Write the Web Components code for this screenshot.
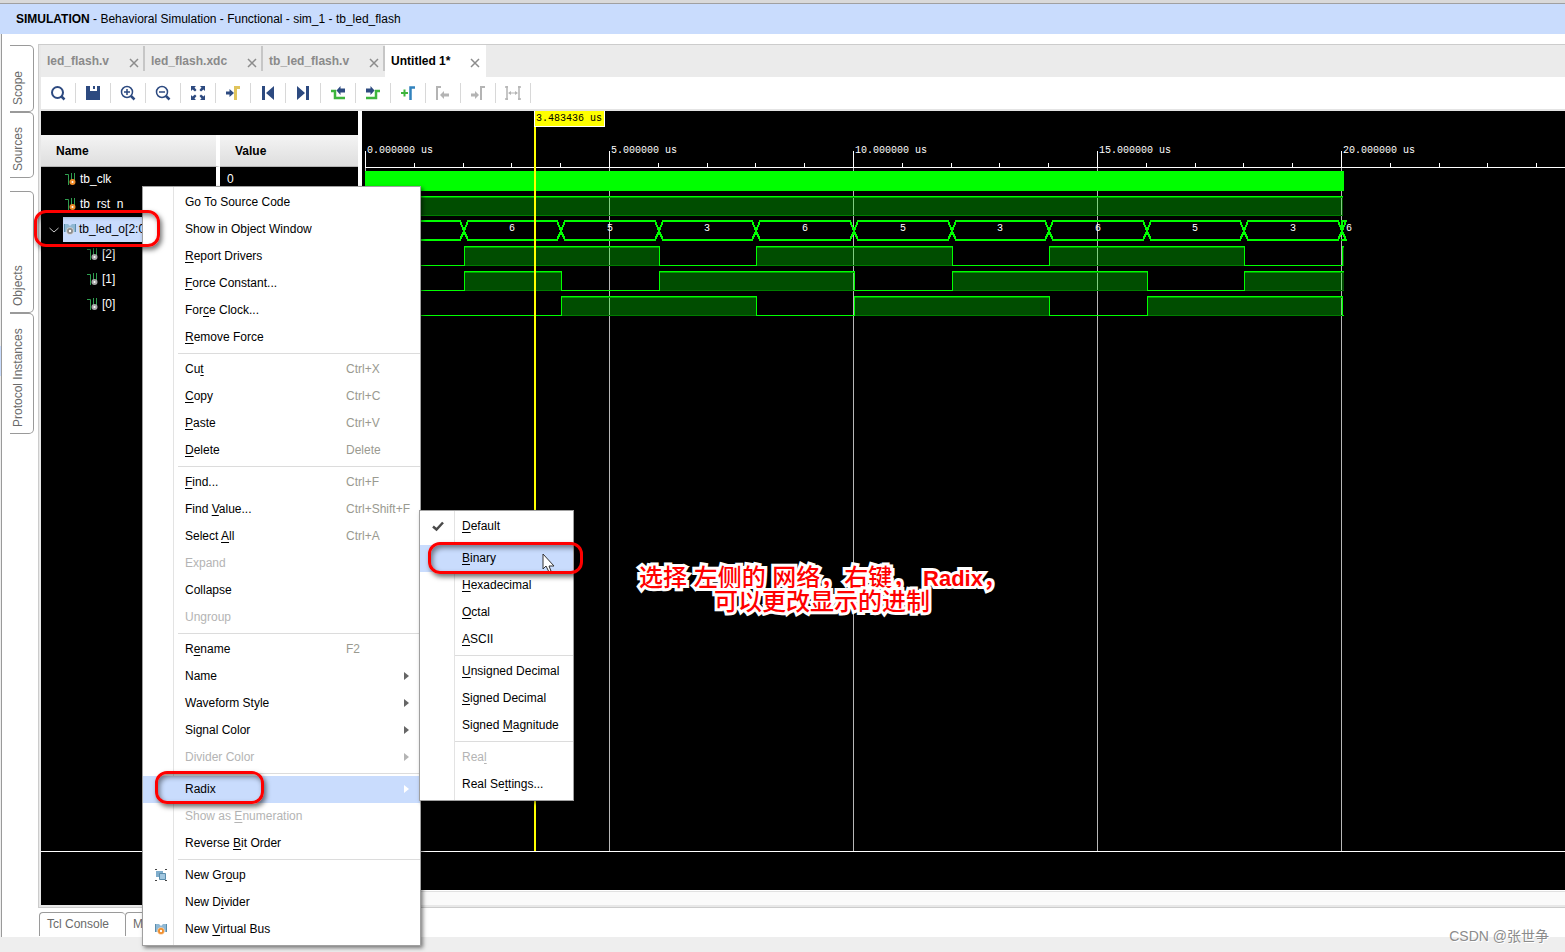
<!DOCTYPE html>
<html lang="en">
<head>
<meta charset="utf-8">
<title>Behavioral Simulation - tb_led_flash</title>
<style>
  body { margin: 0; font: 12px/16px "Liberation Sans", Arial, sans-serif; color: #000; }
</style>
</head>
<body>
<sim-app></sim-app>

<script>
const define = (name, html, setup) => {
  const template = document.createElement('template');
  template.innerHTML = html;
  customElements.define(name, class extends HTMLElement {
    constructor() {
      super();
      this.attachShadow({ mode: 'open' }).append(template.content.cloneNode(true));
    }
    connectedCallback() {
      if (setup && !this.ready) { this.ready = true; setup(this, this.shadowRoot); }
    }
  });
};

/* ---------- icons ---------- */
const NAVY = '#2d4a80', GREEN = '#3db53d', GREY = '#b4b4b4';
const lens = '<circle cx="7.500" cy="7.500" r="5.500" fill="none" stroke="#2d4a80" stroke-width="2"/><path d="M11 11 14.500 14.500" stroke="#2d4a80" stroke-width="2.500"/>';
const thinLens = '<circle cx="7" cy="7" r="5.500" fill="none" stroke="#2d4a80" stroke-width="1.500"/><path d="M11 11 14.500 14.500" stroke="#2d4a80" stroke-width="2.500"/>';
const signal = dot => `<path d="M0 1.500h3.500V12M6.500 0v8M9.500 0v7" fill="none" stroke="#2f9e4f"/><circle cx="7.500" cy="9" r="3" fill="${dot}"/><circle cx="7.500" cy="9" r="1" fill="#fff"/>`;
const bus = dot => `<path d="M0 1h4l2 2 2-2h4v8H0z" fill="#8fb8d4"/><path d="M.500 1v8M11.500 1v8" stroke="#5a8cab"/><circle cx="6" cy="8" r="3.500" fill="${dot}" stroke="#fff" stroke-width=".5"/><circle cx="6" cy="8" r="1.200" fill="#fff"/>`;
const ICONS = {
  search: [16, lens],
  save: [16, `<path d="M1 1h4v5h7V1h3v14H1z" fill="${NAVY}"/><path d="M8 1h2v3H8z" fill="${NAVY}"/>`],
  zoomin: [16, thinLens + `<path d="M4 7h6M7 4v6" stroke="${NAVY}" stroke-width="1.500"/>`],
  zoomout: [16, thinLens + `<path d="M4 7h6" stroke="${NAVY}" stroke-width="1.500"/>`],
  fit: [16, `<path d="M1 1h5L4.500 2.500 6.500 5 5 6.500 2.500 4.500 1 6zM15 1v5l-1.500-1.500L11 6.500 9.500 5l2-2.500L10 1zM1 15v-5l1.500 1.500L5 9.500 6.500 11l-2 2.500L6 15zM15 15h-5l1.500-1.500-2-2.500L11 9.500l2.500 2L15 10z" fill="${NAVY}"/>`],
  goto: [16, `<path d="M1 6.500h3.500V4L9 8l-4.500 4V9.500H1z" fill="${NAVY}"/><path d="M10.500 15V2.500H15" fill="none" stroke="#e0c45c" stroke-width="3"/>`],
  first: [16, `<path d="M2 1h3v14H2zM14 1v14L6 8z" fill="${NAVY}"/>`],
  last: [16, `<path d="M11 1h3v14h-3zM2 1v14l8-7z" fill="${NAVY}"/>`],
  prev: [16, `<path d="M1 6h4v7h10" fill="none" stroke="${GREEN}" stroke-width="2.500"/><path d="M6.500 5.500 10.500 1v2.500H15v4h-4.500V10z" fill="${NAVY}"/>`],
  next: [16, `<path d="M15 6h-4v7H1" fill="none" stroke="${GREEN}" stroke-width="2.500"/><path d="M9.500 5.500 5.500 1v2.500H1v4h4.500V10z" fill="${NAVY}"/>`],
  add: [16, `<path d="M1 8h7M4.500 4.500v7" stroke="${GREEN}" stroke-width="2"/><path d="M10.500 15V2.500H15" fill="none" stroke="#3282bd" stroke-width="2.500"/>`],
  leave: [16, `<path d="M2 15V2h4" fill="none" stroke="${GREY}" stroke-width="2"/><path d="M5 10l4-4v2.500h5v3H9V14z" fill="${GREY}"/>`],
  enter: [16, `<path d="M11 15V2h4" fill="none" stroke="${GREY}" stroke-width="2"/><path d="M9 10 5 6v2.500H1v3h4V14z" fill="${GREY}"/>`],
  span: [16, `<path d="M2 1v14M14 1v14M0 2h3M0 14h3M13 2h3M13 14h3" fill="none" stroke="${GREY}" stroke-width="1.500"/><path d="M3 8l3-2v1.500h4V6l3 2-3 2V8.500H6V10z" fill="${GREY}"/>`],
  signal: [12, signal('#f08c28')],
  bit: [12, signal('#a8a8a8')],
  bus: [12, bus('#8c8c8c')],
  vbus: [12, bus('#f08c28')],
  chevron: [12, '<path d="M1.500 4 6 8l4.500-4" fill="none" stroke="#c8c8c8"/>'],
  close: [10, '<path d="M1 1l8 8M9 1 1 9" stroke="#8c8c8c" stroke-width="1.500"/>'],
  check: [12, '<path d="M1 6.500 4.500 9.500 11 2.500" fill="none" stroke="#4a4a4a" stroke-width="2.500"/>'],
  group: [12, '<path d="M1 2h7v6H1z" fill="#7fadcc"/><path d="M4.500 4.500h6v6h-6z" fill="#a0c6df" stroke="#5a8cab"/><path d="M0 0h2v1H0zM10 0h2v1h-2zM0 11h2v1H0zM10 11h2v1h-2z" fill="#444"/>'],
};
const icon = name => {
  const el = document.createElement('sim-icon');
  el.setAttribute('name', name);
  return el;
};
customElements.define('sim-icon', class extends HTMLElement {
  connectedCallback() {
    if (this.shadowRoot) return;
    const [size, body] = ICONS[this.getAttribute('name')];
    this.attachShadow({ mode: 'open' }).innerHTML =
      `<style>:host{display:inline-flex}svg{display:block}</style>
       <svg width="${size}" height="${size}" viewBox="0 0 ${size} ${size}" aria-hidden="true">${body}</svg>`;
  }
});

/* ---------- title ---------- */
define('title-bar', `
  <style>
    :host { display: block; border-top: 3px solid #d9d9d9; }
    header { border-top: 1px solid #a0a0a0; background: #c9dcfd; line-height: 30px; padding-left: 16px; }
  </style>
  <header><slot></slot></header>`);

/* ---------- side tabs ---------- */
define('rail-tab', `
  <style>
    :host { display: block; }
    button { all: unset; box-sizing: border-box; display: block; width: 24px; height: var(--size);
      writing-mode: vertical-rl; transform: rotate(180deg); padding: 6px 0 0 7px;
      border: 1px solid #9a9a9a; border-right: 0; border-radius: 5px 0 0 5px; color: #6a6a6a; line-height: 16px; }
  </style>
  <button role="tab"><slot></slot></button>`,
  (host, root) => root.querySelector('button').style.setProperty('--size', host.getAttribute('size') + 'px'));

define('side-rail', `
  <style>
    :host { display: flex; }
    .edge { width: 1px; border-right: 1px solid #9a9a9a;
      background: linear-gradient(#c9dcfd, #c9dcfd) 0 312px / 1px 30px no-repeat #eee; }
    nav { display: flex; flex-direction: column; padding: 11px 4px 0 8px; }
    .gap { height: 13px; }
  </style>
  <div class="edge"></div>
  <nav role="tablist">
    <rail-tab size="67">Scope</rail-tab>
    <rail-tab size="66">Sources</rail-tab>
    <div class="gap"></div>
    <rail-tab size="122">Objects</rail-tab>
    <rail-tab size="121">Protocol Instances</rail-tab>
  </nav>`);

/* ---------- editor tabs ---------- */
define('editor-tab', `
  <style>
    :host { display: flex; padding: 1px 0 0; color: #8a8a8a; font-weight: bold; }
    .tab { display: flex; align-items: center; gap: 20px; padding: 0 4px 0 6px; border-right: 2px solid #c6c6c6; height: 25px; }
    :host([active]) { background: #fff; color: #000; }
    :host([active]) .tab { border-color: transparent; }
    button { all: unset; display: flex; }
    .close { padding-top: 8px; }
    .name { padding-top: 4px; }
  </style>
  <div class="tab"><button class="name" role="tab"><slot></slot></button>
  <button class="close" aria-label="Close"><sim-icon name="close"></sim-icon></button></div>`);

/* ---------- toolbar ---------- */
define('tool-button', `
  <style>
    :host { display: flex; width: 34px; border-right: 1px solid #d8d8d8; height: 20px; }
    button { all: unset; flex: 1; display: flex; align-items: center; justify-content: center; }
  </style>
  <button></button>`,
  (host, root) => {
    const button = root.querySelector('button');
    button.setAttribute('aria-label', host.getAttribute('icon'));
    button.append(icon(host.getAttribute('icon')));
  });

define('tool-bar', `
  <style>:host { display: flex; align-items: center; height: 32px; background: #fff; border-bottom: 2px solid #e4e4e4; }</style>
  <slot></slot>`);

/* ---------- signal list ---------- */
define('signal-table', `
  <style>
    :host { display: flex; flex-direction: column; background: #000; color: #fff; padding-top: 24px; width: 317px; }
    table { border-collapse: separate; border-spacing: 0; table-layout: fixed; width: 100%; }
    th { box-sizing: border-box; height: 32px; padding: 0 0 0 15px; text-align: left; color: #000;
      background: linear-gradient(#f4f4f4, #dedede); border-bottom: 1px solid #b4b4b4; }
    th, td { border-right: 4px solid #fff; }
    th:last-child, td:last-child { border-right: 0; }
    th:first-child { width: 179px; }
    td { box-sizing: border-box; height: 25px; padding: 0; }
    td:last-child { padding: 0 0 2px 7px; }
    .cell { display: flex; align-items: center; height: 25px; padding-left: 24px; overflow: hidden; white-space: nowrap; }
    .sig { box-sizing: border-box; flex: 1; display: flex; align-items: center; gap: 3px; height: 25px; padding-bottom: 1px; }
    .bus { padding-left: 7px; gap: 3px; }
    .bus .sig { background: #c9dcfd; color: #000; padding-left: 1px; }
    .bit { padding-left: 46px; }
    .foot { margin-top: auto; height: 53px; border-top: 1px solid #fff; }
  </style>
  <table>
    <thead><tr><th>Name</th><th>Value</th></tr></thead>
    <tbody>
      <tr><td><div class="cell"><span class="sig"><sim-icon name="signal"></sim-icon>tb_clk</span></div></td><td>0</td></tr>
      <tr><td><div class="cell"><span class="sig"><sim-icon name="signal"></sim-icon>tb_rst_n</span></div></td><td></td></tr>
      <tr><td><div class="cell bus"><sim-icon name="chevron"></sim-icon><span class="sig"><sim-icon name="bus"></sim-icon>tb_led_o[2:0]</span></div></td><td></td></tr>
      <tr><td><div class="cell bit"><span class="sig"><sim-icon name="bit"></sim-icon>[2]</span></div></td><td></td></tr>
      <tr><td><div class="cell bit"><span class="sig"><sim-icon name="bit"></sim-icon>[1]</span></div></td><td></td></tr>
      <tr><td><div class="cell bit"><span class="sig"><sim-icon name="bit"></sim-icon>[0]</span></div></td><td></td></tr>
    </tbody>
  </table>
  <div class="foot"></div>`);

/* ---------- waveform ---------- */
define('wave-view', `
  <style>
    :host { display: flex; flex-direction: column; flex: 1; min-width: 0; margin-left: 4px; }
    .plot { flex: 1; position: relative; background: #000; overflow: hidden; }
    svg { position: absolute; inset: 0; width: 100%; height: 100%; }
    text { font: 10px "Liberation Mono", monospace; fill: #fff; }
    .marker { position: absolute; left: 172px; top: 0; bottom: 39px; border-left: 2px solid #ff0; }
    .marker output { position: absolute; left: -2px; top: 0; padding: 1px 2px 0 1px; background: #ff0; color: #000;
      border: solid #fff; border-width: 0 1px 1px 1px; font: 10px/14px "Liberation Mono", monospace; white-space: nowrap; }
    .scroll { height: 13px; background: #fafafa; border-top: 1px solid #e0e0e0; margin-top: 1px; }
  </style>
  <div class="plot">
    <svg xmlns="http://www.w3.org/2000/svg" shape-rendering="crispEdges"></svg>
    <div class="marker"><output>3.483436 us</output></div>
  </div>
  <div class="scroll"></div>`,
  (host, root) => {
    const svg = root.querySelector('svg');
    const ORIGIN = 3, STEP = 48.8, FLOOR = 740, END = 982;
    const edges = Array.from({ length: 11 }, (_, k) => Math.floor(4.5 + 97.6 * k));
    let out = '';
    const rect = (x, y, w, h, c) => out += `<rect x="${x}" y="${y}" width="${w}" height="${h}" fill="${c}"/>`;

    rect(ORIGIN, 56, '100%', 1, '#fff');
    rect(0, FLOOR, '100%', 1, '#fff');
    for (let i = 0; i < 60; i++) {
      const x = Math.round(ORIGIN + i * STEP);
      if (i % 5 === 0) {
        if (i <= 20) {
          rect(x, 40, 1, 17, '#fff');
          rect(x, 57, 1, FLOOR - 57, '#b8b8b8');
          out += `<text x="${x + 2}" y="42">${i}.000000 us</text>`;
        }
      } else rect(x, 52, 1, 4, '#fff');
    }
    rect(ORIGIN, 60, END - ORIGIN, 20, '#0f0');

    /* high level: translucent body, bright top edge, dim bottom edge */
    const high = (a, b, y) => {
      rect(a, y, b - a, 20, 'rgba(0,255,0,.3)');
      rect(a, y + 19, b - a, 1, '#007c00');
      rect(a, y + 1, b - a, 1, '#00a000');
      rect(a, y, b - a, 1, '#0f0');
    };
    high(ORIGIN, END - 1, 85);

    /* one-bit lanes, one level per bus period */
    const bit = (levels, y) => levels.forEach((on, k) => {
      const a = k ? edges[k] : ORIGIN, b = k < 10 ? edges[k + 1] : END;
      if (on) high(a, b, y); else rect(a, y + 19, b - a, 1, '#0f0');
      if (k && levels[k - 1] !== on) rect(a, y, 1, 20, '#0f0');
    });
    bit([0, 1, 1, 0, 1, 1, 0, 1, 1, 0, 1], 135);
    bit([0, 1, 0, 1, 1, 0, 1, 1, 0, 1, 1], 160);
    bit([0, 0, 1, 1, 0, 1, 1, 0, 1, 1, 0], 185);

    /* bus lane */
    for (let k = 0; k < 10; k++) {
      const a = edges[k], b = edges[k + 1];
      out += `<path d="M${a} 120L${a + 4} 110H${b - 4}L${b} 120L${b - 4} 129H${a + 4}Z" fill="none" stroke="#0f0" stroke-width="2"/>`;
      if (k) out += `<text x="${Math.floor((a + b) / 2)}" y="120" text-anchor="middle">${[3, 6, 5][k % 3]}</text>`;
    }
    out += `<path d="M985 110H980L${edges[10]} 120L984 129H979M${edges[10]} 120L984 110" fill="none" stroke="#0f0" stroke-width="2"/>`;
    out += `<text x="984" y="120">6</text>`;
    svg.innerHTML = out;
  });

/* ---------- menus ---------- */
define('menu-item', `
  <style>
    :host { display: block; }
    button { all: unset; box-sizing: border-box; width: 100%; height: 27px; padding-bottom: 1px; display: flex; align-items: center; }
    .icon { width: 36px; display: flex; justify-content: center; margin-right: 6px; flex: none; }
    .label { flex: 1; white-space: nowrap; text-underline-offset: 2px; }
    .key { width: 74px; color: #9a9a90; white-space: nowrap; }
    .arrow { width: 0; border: 4px solid transparent; border-left: 5px solid #666; border-right: 0; margin-right: 11px; }
    :host([disabled]) { color: #b4b4b4; }
    :host([disabled]) .arrow { border-left-color: #b4b4b4; }
    :host([hot]) button { background: #c9dcfd; }
    :host([hot]) .arrow { border-left-color: #fff; }
  </style>
  <button role="menuitem"><span class="icon"></span><span class="label"><slot></slot></span></button>`,
  (host, root) => {
    const button = root.querySelector('button');
    if (host.hasAttribute('icon')) root.querySelector('.icon').append(icon(host.getAttribute('icon')));
    if (host.hasAttribute('key')) {
      const key = document.createElement('span');
      key.className = 'key'; key.textContent = host.getAttribute('key');
      button.append(key);
    }
    if (host.hasAttribute('sub')) {
      const arrow = document.createElement('span');
      arrow.className = 'arrow';
      button.append(arrow);
    }
    button.disabled = host.hasAttribute('disabled');
  });

define('menu-line', `
  <style>:host { display: block; height: 1px; margin: 2px 0 2px 35px; background: #dcdcdc; }</style>`);

define('context-menu', `
  <style>
    :host { display: block; position: absolute; box-sizing: border-box; border: 1px solid #a0a0a0; padding: 2px 0;
      box-shadow: 2px 2px 4px rgba(0,0,0,.5);
      background: linear-gradient(#e3e3e3, #e3e3e3) var(--gutter, 30px) 0 / 1px 100% no-repeat #fff; color: #000; }
  </style>
  <div role="menu"><slot></slot></div>`);

/* ---------- annotations ---------- */
define('call-out', `
  <style>
    :host { position: absolute; box-sizing: border-box; border: 3px solid #f00; border-radius: 12px;
      box-shadow: 2px 3px 5px rgba(0,0,0,.55), inset 2px 3px 5px rgba(0,0,0,.45); }
  </style>`);

define('wave-note', `
  <style>
    :host { position: absolute; text-align: center; color: #f00;
      font: 500 24px/24px "Liberation Sans", "Noto Sans CJK SC", sans-serif;
      -webkit-text-stroke: 6px #fff; paint-order: stroke fill; stroke-linejoin: round; }
    div { white-space: pre; height: 24px; }
    b { font-size: 22px; }
  </style>
  <div>选择 左侧的 网络，右键， <b>Radix，</b></div><div>可以更改显示的进制</div>`);

/* ---------- bottom tabs ---------- */
define('console-tabs', `
  <style>
    :host { display: flex; padding: 4px 0 1px 1px; }
    button { all: unset; box-sizing: border-box; width: 86px; height: 24px; padding: 0 7px; line-height: 23px;
      border: 1px solid #9a9a9a; border-bottom: 0; border-right: 0; border-radius: 4px 4px 0 0; color: #6a6a6a; }
  </style>
  <button role="tab">Tcl Console</button><button role="tab">Messages</button>`);

/* ---------- application ---------- */
define('sim-app', `
  <style>
    :host { display: flex; flex-direction: column; min-height: 100vh; position: relative; background: #eee; overflow: hidden; }
    .main { flex: 1; display: flex; background: #fff; margin-bottom: 15px; }
    .work { flex: 1; min-width: 0; display: flex; flex-direction: column; padding-top: 10px; }
    .panel { flex: 1; display: flex; flex-direction: column; border: solid #ccc; border-width: 1px 0 1px 1px; background: #e8e8e8; padding: 0 0 2px 2px; }
    .tabs { display: flex; height: 32px; background: #ebebeb; }
    .view { flex: 1; display: flex; background: #fff; }
    .m1 { left: 142px; top: 186px; width: 279px; }
    .m2 { left: 419px; top: 510px; width: 155px; --gutter: 34px; }
    .c1 { left: 34px; top: 210px; width: 126px; height: 37px; }
    .c2 { left: 428px; top: 542px; width: 155px; height: 32px; }
    .c3 { left: 155px; top: 771px; width: 109px; height: 33px; }
    wave-note { left: 639px; top: 566px; }
    .pointer { position: absolute; left: 542px; top: 553px; }
    .mark { position: absolute; right: 16px; bottom: 6px; font: 14px/20px "Liberation Sans", "Noto Sans CJK SC", sans-serif;
      color: #8c8c8c; text-shadow: 1px 1px 0 #fff; }
  </style>
  <title-bar><b>SIMULATION</b> - Behavioral Simulation - Functional - sim_1 - tb_led_flash</title-bar>
  <div class="main">
    <side-rail></side-rail>
    <div class="work">
      <div class="panel">
        <div class="tabs" role="tablist">
          <editor-tab>led_flash.v</editor-tab>
          <editor-tab>led_flash.xdc</editor-tab>
          <editor-tab>tb_led_flash.v</editor-tab>
          <editor-tab active>Untitled 1*</editor-tab>
        </div>
        <tool-bar>
          <tool-button icon="search"></tool-button><tool-button icon="save"></tool-button>
          <tool-button icon="zoomin"></tool-button><tool-button icon="zoomout"></tool-button>
          <tool-button icon="fit"></tool-button><tool-button icon="goto"></tool-button>
          <tool-button icon="first"></tool-button><tool-button icon="last"></tool-button>
          <tool-button icon="prev"></tool-button><tool-button icon="next"></tool-button>
          <tool-button icon="add"></tool-button><tool-button icon="leave"></tool-button>
          <tool-button icon="enter"></tool-button><tool-button icon="span"></tool-button>
        </tool-bar>
        <div class="view">
          <signal-table></signal-table>
          <wave-view></wave-view>
        </div>
      </div>
      <console-tabs></console-tabs>
    </div>
  </div>
  <wave-note></wave-note>
  <context-menu class="m1">
    <menu-item>Go To Source Code</menu-item>
    <menu-item>Show in Object Window</menu-item>
    <menu-item><u>R</u>eport Drivers</menu-item>
    <menu-item><u>F</u>orce Constant...</menu-item>
    <menu-item>For<u>c</u>e Clock...</menu-item>
    <menu-item><u>R</u>emove Force</menu-item>
    <menu-line></menu-line>
    <menu-item key="Ctrl+X">Cu<u>t</u></menu-item>
    <menu-item key="Ctrl+C"><u>C</u>opy</menu-item>
    <menu-item key="Ctrl+V"><u>P</u>aste</menu-item>
    <menu-item key="Delete"><u>D</u>elete</menu-item>
    <menu-line></menu-line>
    <menu-item key="Ctrl+F"><u>F</u>ind...</menu-item>
    <menu-item key="Ctrl+Shift+F">Find <u>V</u>alue...</menu-item>
    <menu-item key="Ctrl+A">Select <u>A</u>ll</menu-item>
    <menu-item disabled>Expand</menu-item>
    <menu-item>Collapse</menu-item>
    <menu-item disabled>Ungroup</menu-item>
    <menu-line></menu-line>
    <menu-item key="F2">R<u>e</u>name</menu-item>
    <menu-item sub>Name</menu-item>
    <menu-item sub>Waveform Style</menu-item>
    <menu-item sub>Signal Color</menu-item>
    <menu-item sub disabled>Divider Color</menu-item>
    <menu-line></menu-line>
    <menu-item sub hot>Radix</menu-item>
    <menu-item disabled>Show as <u>E</u>numeration</menu-item>
    <menu-item>Reverse <u>B</u>it Order</menu-item>
    <menu-line></menu-line>
    <menu-item icon="group">New Gr<u>o</u>up</menu-item>
    <menu-item>New D<u>i</u>vider</menu-item>
    <menu-item icon="vbus">New <u>V</u>irtual Bus</menu-item>
  </context-menu>
  <context-menu class="m2">
    <menu-item icon="check"><u>D</u>efault</menu-item>
    <menu-line></menu-line>
    <menu-item hot><u>B</u>inary</menu-item>
    <menu-item><u>H</u>exadecimal</menu-item>
    <menu-item><u>O</u>ctal</menu-item>
    <menu-item><u>A</u>SCII</menu-item>
    <menu-line></menu-line>
    <menu-item><u>U</u>nsigned Decimal</menu-item>
    <menu-item><u>S</u>igned Decimal</menu-item>
    <menu-item>Signed <u>M</u>agnitude</menu-item>
    <menu-line></menu-line>
    <menu-item disabled>Rea<u>l</u></menu-item>
    <menu-item>Real Se<u>t</u>tings...</menu-item>
  </context-menu>
  <svg class="pointer" width="14" height="20" viewBox="0 0 14 20" aria-hidden="true"><path d="M1 1v15l3-3 3 6 2-1-2-5h5z" fill="#fff" stroke="#333"/></svg>
  <call-out class="c1"></call-out>
  <call-out class="c2"></call-out>
  <call-out class="c3"></call-out>
  <div class="mark">CSDN @张世争</div>`);
</script>
</body>
</html>
